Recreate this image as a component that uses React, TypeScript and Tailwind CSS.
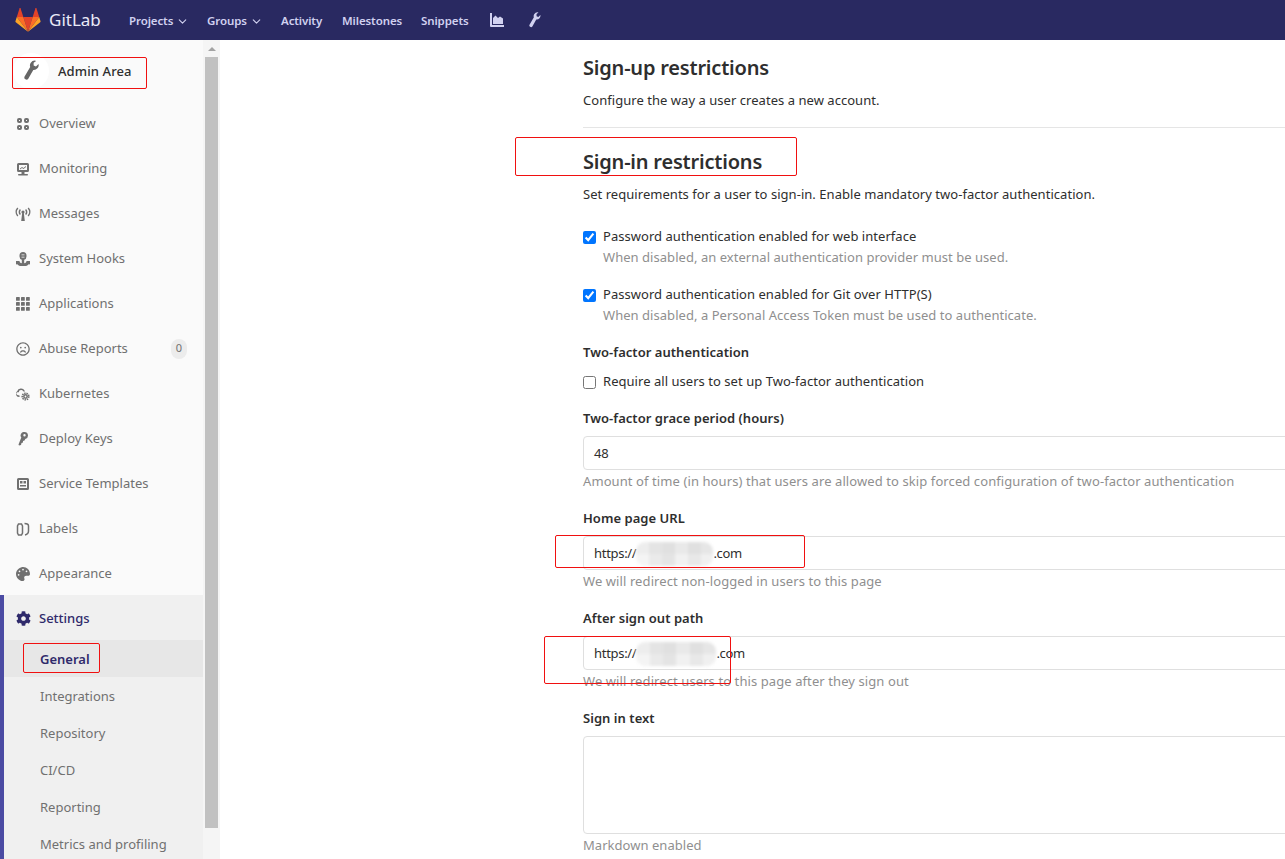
import { FaCog, FaPalette, FaRegFrown } from 'react-icons/fa';
import { ChevronDown } from 'lucide-react';
import type { ReactNode } from 'react';

const font = 'font-["Noto_Sans",sans-serif]';

function Logo() {
  return (
    <svg viewBox="0 0 36 34" className="w-[26px] h-[24px]">
      <path d="M18 33.5 24.6 12.7H11.4Z" fill="#e24329" />
      <path d="M18 33.5 11.4 12.7H2.1Z" fill="#fc6d26" />
      <path d="M2.1 12.7.2 18.7c-.2.6 0 1.2.5 1.5L18 33.5Z" fill="#fca326" />
      <path d="M2.1 12.7h9.3L7.4.5c-.2-.6-1.1-.6-1.3 0Z" fill="#e24329" />
      <path d="M18 33.5 24.6 12.7h9.3Z" fill="#fc6d26" />
      <path d="M33.9 12.7l1.9 6c.2.6 0 1.2-.5 1.5L18 33.5Z" fill="#fca326" />
      <path d="M33.9 12.7h-9.3L28.6.5c.2-.6 1.1-.6 1.3 0Z" fill="#e24329" />
    </svg>
  );
}

function Wrench({ className }: { className: string }) {
  return (
    <svg viewBox="0 0 14 18" className={`${className} fill-current`}>
      <path d="M10.200.3A4.300 4.300 0 0 0 6.300 6L1.400 14.300a1.900 1.900 0 0 0 3.200 2L9 8.500a4.300 4.300 0 0 0 4.600-5.200L11.300 5.500 9.300 4.700V2.300L11.500.6A4.300 4.300 0 0 0 10.200.3Z" />
    </svg>
  );
}

const ic = 'w-[14px] h-[14px] text-[#707070] fill-current';

const icons: Record<string, ReactNode> = {
  Overview: (
    <svg viewBox="0 0 14 14" className="w-[14px] h-[14px] text-[#707070]" fill="none" stroke="currentColor" strokeWidth="2">
      <rect x="2" y="2" width="3" height="3" rx="1" />
      <rect x="9" y="2" width="3" height="3" rx="1" />
      <rect x="2" y="9" width="3" height="3" rx="1" />
      <rect x="9" y="9" width="3" height="3" rx="1" />
    </svg>
  ),
  Monitoring: (
    <svg viewBox="0 0 14 14" className={ic}>
      <path fillRule="evenodd" d="M2.500 1h9A1.500 1.500 0 0 1 13 2.500v6A1.500 1.500 0 0 1 11.500 10h-9A1.500 1.500 0 0 1 1 8.500v-6A1.500 1.500 0 0 1 2.500 1ZM3 3v5h8V3Z" />
      <path d="M4 6.500 6 5l1.500 1L10 4v1L7.500 7 6 6 4 7.500Z" />
      <rect x="5.500" y="10" width="3" height="2" />
      <rect x="2" y="12" width="10" height="1.500" rx=".7" />
    </svg>
  ),
  Messages: (
    <svg viewBox="0 0 16 14" className="w-[16px] h-[14px] text-[#707070] -ml-[1px]" fill="none" stroke="currentColor" strokeWidth="1.500">
      <circle cx="8" cy="5" r="1.600" fill="currentColor" stroke="none" />
      <path d="M5.400 2.500a3.500 3.500 0 0 0 0 5M10.600 2.500a3.500 3.500 0 0 1 0 5M2.800 1a6 6 0 0 0 0 8M13.200 1a6 6 0 0 1 0 8" />
      <path d="M7.200 6h1.600l1 8H6.200Z" fill="currentColor" stroke="none" />
    </svg>
  ),
  'System Hooks': (
    <svg viewBox="0 0 14 14" className={ic}>
      <path fillRule="evenodd" d="M7 0a3.500 3.500 0 0 1 3.500 3.500v1a3.500 3.500 0 0 1-2.300 3.300V11.300a3 3 0 0 0 2.500-1.700L9.800 9H14v3.700l-1-.7a6 6 0 0 1-6 2 6 6 0 0 1-6-2l-1 .7V9h4.200l-.9.600a3 3 0 0 0 2.500 1.700V7.800A3.500 3.500 0 0 1 3.500 4.500v-1A3.500 3.500 0 0 1 7 0ZM5.500 2.500v.8h3v-.8Zm0 2.200v.8h3v-.8Z" />
    </svg>
  ),
  Applications: (
    <svg viewBox="0 0 14 14" className={ic}>
      {[0, 5, 10].flatMap((y) =>
        [0, 5, 10].map((x) => <rect key={`${x}-${y}`} x={x} y={y} width="3.800" height="3.800" rx=".6" />),
      )}
    </svg>
  ),
  'Abuse Reports': <FaRegFrown className={ic} />,
  Kubernetes: (
    <svg viewBox="0 0 14 14" className={ic}>
      <path d="M5 1.500a3.700 3.700 0 0 1 3.500 2L9 4.500H7.500A2.300 2.300 0 0 0 5 3a2.200 2.200 0 0 0-2.200 2.200H2a1.400 1.400 0 0 0-.5 2.800l2 .6v1.400H3a3.200 3.200 0 0 1-1.800-5.800A3.700 3.700 0 0 1 5 1.500Z" />
      <circle cx="9.500" cy="9.500" r="3.300" fill="none" stroke="currentColor" strokeWidth="1.600" strokeDasharray="1.500 .8" />
      <circle cx="9.500" cy="9.500" r="2.400" />
      <circle cx="9.500" cy="9.500" r=".9" fill="#fafafa" />
    </svg>
  ),
  'Deploy Keys': (
    <svg viewBox="0 0 14 14" className={ic}>
      <path fillRule="evenodd" d="M8.500 0a3.500 3.500 0 0 1 .8 6.900L8.500 8.500 7 9v1.500l-1.500.5-.5 2-2 .5-.5-1L5.300 5.600A3.500 3.500 0 0 1 8.500 0Zm0 2a1.200 1.200 0 1 0 0 2.400 1.200 1.200 0 0 0 0-2.400Z" />
    </svg>
  ),
  'Service Templates': (
    <svg viewBox="0 0 14 14" className={ic}>
      <path fillRule="evenodd" d="M2.500 1h9A1.500 1.500 0 0 1 13 2.500v9a1.500 1.500 0 0 1-1.500 1.500h-9A1.500 1.500 0 0 1 1 11.500v-9A1.500 1.500 0 0 1 2.500 1ZM3 3v8h8V3Z" />
      <rect x="4" y="4" width="2.500" height="2.500" />
      <rect x="7.500" y="4" width="2.500" height="2.500" />
      <rect x="4" y="8" width="6" height="1.500" />
    </svg>
  ),
  Labels: (
    <svg viewBox="0 0 14 14" className="w-[14px] h-[14px] text-[#707070]" fill="none" stroke="currentColor" strokeWidth="1.500">
      <path d="M2.500 2h3l1 2v7l-1 2h-3l-1-2V4Z" />
      <path d="M8.500 1.500c2.500 0 4 1 4 2.500v5c0 2-1.500 3.500-3.500 4" />
    </svg>
  ),
  Appearance: <FaPalette className={ic} />,
};

const items = ['Overview', 'Monitoring', 'Messages', 'System Hooks', 'Applications', 'Abuse Reports', 'Kubernetes', 'Deploy Keys', 'Service Templates', 'Labels', 'Appearance'];
const subItems = ['Integrations', 'Repository', 'CI/CD', 'Reporting', 'Metrics and profiling'];

function Sidebar() {
  return (
    <aside className="w-[220px] h-full flex shrink-0">
      <div className="w-[203px] bg-[#fafafa] h-full overflow-hidden">
        <div className="h-[60px] pl-[13px] pt-[13px] flex items-start">
          <div className="w-[36px] h-[36px] rounded-full bg-white flex items-center justify-center">
            <Wrench className="w-[16px] h-[21px] text-[#666] -mt-[2px]" />
          </div>
          <span className="ml-[9px] mt-[8px] text-[13px] leading-[20px] font-medium tracking-[0.1px] text-[#2e2e2e]">Admin Area</span>
        </div>
        {items.map((name) => (
          <div key={name} className="h-[45px] flex items-center pl-[16px] pt-[2px] text-[13px] text-[#707070]">
            <span className="w-[23px] flex">{icons[name]}</span>
            <span>{name}</span>
            {name === 'Abuse Reports' && (
              <span className="ml-auto mr-[16px] w-[16px] h-[20px] rounded-full bg-[#ececec] text-[11px] flex items-center justify-center">0</span>
            )}
          </div>
        ))}
        <div className="bg-[#f0f0f0] border-l-4 border-[#4b4ba3]">
          <div className="h-[45px] flex items-center pl-[12px] pt-[2px] text-[13px] font-medium text-[#2f2a6b]">
            <FaCog className="w-[15px] h-[15px] mr-[8px]" />
            <span>Settings</span>
          </div>
          <div className="h-[37px] flex items-center pl-[36px] pt-[2px] bg-[#e7e7e7] text-[13px] font-semibold text-[#2f2a6b]">General</div>
          {subItems.map((s) => (
            <div key={s} className="h-[37px] flex items-center pl-[36px] pt-[2px] text-[13px] text-[#707070]">{s}</div>
          ))}
        </div>
      </div>
      <div className="flex-1 bg-[#f5f5f5] flex flex-col items-center">
        <div className="h-[17px] flex items-center justify-center">
          <div className="w-0 h-0 border-x-[4px] border-x-transparent border-b-[4px] border-b-[#a3a3a3]" />
        </div>
        <div className="w-[13px] h-[771px] bg-[#c1c1c1] mr-[1px]" />
      </div>
    </aside>
  );
}

function Input({ children, className = 'h-[34px]' }: { children?: ReactNode; className?: string }) {
  return (
    <div className={`${className} mt-[8px] border border-[#dfdfdf] rounded-[4px] flex items-center px-[10px] pt-[2px] text-[13px] tracking-[-0.3px] text-[#2e2e2e]`}>
      {children}
    </div>
  );
}

const mosaic = ['bg-[#ededed]', 'bg-[#e4e4e4]', 'bg-[#e0e0e0]', 'bg-[#e9e9e9]', 'bg-[#e0e0e0]', 'bg-[#e6e6e6]', 'bg-[#f4f4f4]', 'bg-[#eaeaea]', 'bg-[#e4e4e4]', 'bg-[#f1f1f1]', 'bg-[#e8e8e8]', 'bg-[#f0f0f0]'];

function Blurred({ w }: { w: string }) {
  return (
    <span className={`${w} h-[24px] rounded-[9px] overflow-hidden blur-[1.5px] grid grid-cols-6 grid-rows-2`}>
      {mosaic.map((c, i) => <span key={i} className={c} />)}
    </span>
  );
}

function Help({ children, wide }: { children: ReactNode; wide?: boolean }) {
  return <p className={`text-[13px] leading-[20px] text-[#8f8f8f] ${wide ? 'tracking-[0.09px]' : ''}`}>{children}</p>;
}

function Label({ children, className = '' }: { children: ReactNode; className?: string }) {
  return <p className={`text-[13px] leading-[20px] font-semibold text-[#2e2e2e] ${className}`}>{children}</p>;
}

function Check({ checked, label }: { checked?: boolean; label: string }) {
  return (
    <label className="flex items-center h-[20px] text-[13px] text-[#2e2e2e]">
      <input type="checkbox" defaultChecked={checked} className="w-[13px] h-[13px] mr-[7px] accent-[#0075ff]" />
      {label}
    </label>
  );
}

function Box({ className }: { className: string }) {
  return <div className={`${className} absolute border border-[#f01010] rounded-[2px] pointer-events-none`} />;
}

export default function App() {
  return (
    <div className={`${font} relative w-[1285px] h-[859px] overflow-hidden bg-white flex flex-col`}>
      <header className="h-[40px] shrink-0 bg-[#292961] flex items-center text-[11.5px] tracking-[-0.1px] font-semibold text-[#d1d1f0]">
        <div className="ml-[15px]"><Logo /></div>
        <span className="ml-[8px] w-[80px] text-[17px] tracking-normal font-normal text-[#eaeaf8]">GitLab</span>
        <span className="flex items-center w-[78px] pt-[2px]">Projects<ChevronDown className="w-[13px] h-[13px] ml-[3px]" /></span>
        <span className="flex items-center w-[74px] pt-[2px]">Groups<ChevronDown className="w-[13px] h-[13px] ml-[3px]" /></span>
        <span className="w-[61px] pt-[2px]">Activity</span>
        <span className="w-[79px] pt-[2px]">Milestones</span>
        <span className="w-[69px] pt-[2px]">Snippets</span>
        <svg viewBox="0 0 14 14" className="w-[14px] h-[14px] fill-current">
          <path d="M0 0h2v12h12v2H1a1 1 0 0 1-1-1Z" />
          <path d="M3 11V5l2.500-2.500L8 5l2-1.500L13 5.500V11Z" />
        </svg>
        <Wrench className="ml-[24px] w-[13px] h-[16px]" />
      </header>
      <div className="flex-1 flex min-h-0">
        <Sidebar />
        <main className="pl-[363px] w-[1100px] shrink-0 tracking-[0.04px]">
          <h2 className="mt-[14px] text-[20px] leading-[28px] tracking-[-0.2px] font-semibold text-[#2e2e2e]">Sign-up restrictions</h2>
          <p className="mt-[8px] text-[13px] leading-[20px] text-[#2e2e2e]">Configure the way a user creates a new account.</p>
          <hr className="mt-[17px] border-[#e5e5e5]" />
          <h2 className="mt-[20px] text-[20px] leading-[28px] tracking-[-0.2px] font-semibold text-[#2e2e2e]">Sign-in restrictions</h2>
          <p className="mt-[8px] text-[13px] leading-[20px] text-[#2e2e2e]">Set requirements for a user to sign-in. Enable mandatory two-factor authentication.</p>
          <div className="mt-[23px]"><Check checked label="Password authentication enabled for web interface" /></div>
          <div className="pl-[20px]"><Help>When disabled, an external authentication provider must be used.</Help></div>
          <div className="mt-[18px]"><Check checked label="Password authentication enabled for Git over HTTP(S)" /></div>
          <div className="pl-[20px]"><Help>When disabled, a Personal Access Token must be used to authenticate.</Help></div>
          <Label className="mt-[17px]">Two-factor authentication</Label>
          <div className="mt-[10px]"><Check label="Require all users to set up Two-factor authentication" /></div>
          <Label className="mt-[16px]">Two-factor grace period (hours)</Label>
          <Input>48</Input>
          <div className="mt-[1px]"><Help wide>Amount of time (in hours) that users are allowed to skip forced configuration of two-factor authentication</Help></div>
          <Label className="mt-[17px]">Home page URL</Label>
          <Input>https://<Blurred w="w-[77px]" />.com</Input>
          <div className="mt-[1px]"><Help wide>We will redirect non-logged in users to this page</Help></div>
          <Label className="mt-[17px]">After sign out path</Label>
          <Input>https://<Blurred w="w-[80px]" />.com</Input>
          <div className="mt-[1px]"><Help wide>We will redirect users to this page after they sign out</Help></div>
          <Label className="mt-[17px]">Sign in text</Label>
          <Input className="h-[98px]" />
          <div className="mt-[1px]"><Help>Markdown enabled</Help></div>
        </main>
      </div>
      <Box className="left-[12px] top-[57px] w-[135px] h-[32px]" />
      <Box className="left-[515px] top-[137px] w-[282px] h-[39px]" />
      <Box className="left-[555px] top-[535px] w-[250px] h-[33px]" />
      <Box className="left-[544px] top-[636px] w-[187px] h-[48px]" />
      <Box className="left-[23px] top-[643px] w-[77px] h-[30px]" />
    </div>
  );
}
